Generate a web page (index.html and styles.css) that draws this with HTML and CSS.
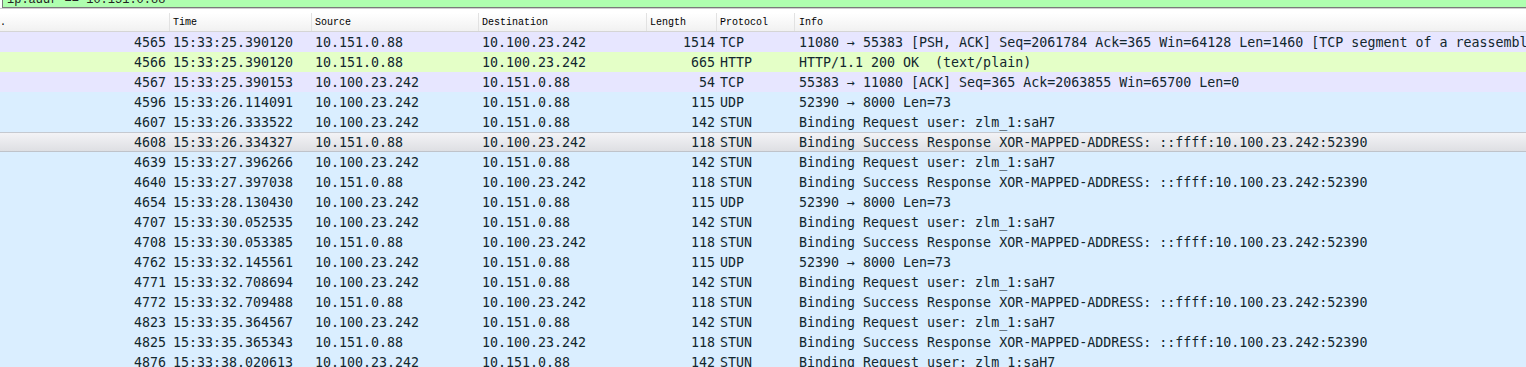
FILE: index.html
```html
<!DOCTYPE html>
<html lang="en">
<head>
    <meta charset="UTF-8">
    <title>Packet list</title>
    <link rel="stylesheet" href="styles.css">
</head>
<body>

    <div class="filter-bar">
        <div class="filter-text">ip.addr == 10.151.0.88</div>
    </div>

    <div class="packet-list">
        <div class="list-header">
            <div class="col no">.</div>
            <div class="col">Time</div>
            <div class="col">Source</div>
            <div class="col">Destination</div>
            <div class="col">Length</div>
            <div class="col">Protocol</div>
            <div class="col info">Info</div>
        </div>

        <div class="row tcp">
            <div class="col no">4565</div><div class="col">15:33:25.390120</div><div class="col">10.151.0.88</div><div class="col">10.100.23.242</div><div class="col len">1514</div><div class="col">TCP</div><div class="col info">11080 → 55383 [PSH, ACK] Seq=2061784 Ack=365 Win=64128 Len=1460 [TCP segment of a reassembl</div>
        </div>
        <div class="row http">
            <div class="col no">4566</div><div class="col">15:33:25.390120</div><div class="col">10.151.0.88</div><div class="col">10.100.23.242</div><div class="col len">665</div><div class="col">HTTP</div><div class="col info">HTTP/1.1 200 OK &nbsp;(text/plain)</div>
        </div>
        <div class="row tcp">
            <div class="col no">4567</div><div class="col">15:33:25.390153</div><div class="col">10.100.23.242</div><div class="col">10.151.0.88</div><div class="col len">54</div><div class="col">TCP</div><div class="col info">55383 → 11080 [ACK] Seq=365 Ack=2063855 Win=65700 Len=0</div>
        </div>
        <div class="row udp">
            <div class="col no">4596</div><div class="col">15:33:26.114091</div><div class="col">10.100.23.242</div><div class="col">10.151.0.88</div><div class="col len">115</div><div class="col">UDP</div><div class="col info">52390 → 8000 Len=73</div>
        </div>
        <div class="row udp">
            <div class="col no">4607</div><div class="col">15:33:26.333522</div><div class="col">10.100.23.242</div><div class="col">10.151.0.88</div><div class="col len">142</div><div class="col">STUN</div><div class="col info">Binding Request user: zlm_1:saH7</div>
        </div>
        <div class="row selected">
            <div class="col no">4608</div><div class="col">15:33:26.334327</div><div class="col">10.151.0.88</div><div class="col">10.100.23.242</div><div class="col len">118</div><div class="col">STUN</div><div class="col info">Binding Success Response XOR-MAPPED-ADDRESS: ::ffff:10.100.23.242:52390</div>
        </div>
        <div class="row udp">
            <div class="col no">4639</div><div class="col">15:33:27.396266</div><div class="col">10.100.23.242</div><div class="col">10.151.0.88</div><div class="col len">142</div><div class="col">STUN</div><div class="col info">Binding Request user: zlm_1:saH7</div>
        </div>
        <div class="row udp">
            <div class="col no">4640</div><div class="col">15:33:27.397038</div><div class="col">10.151.0.88</div><div class="col">10.100.23.242</div><div class="col len">118</div><div class="col">STUN</div><div class="col info">Binding Success Response XOR-MAPPED-ADDRESS: ::ffff:10.100.23.242:52390</div>
        </div>
        <div class="row udp">
            <div class="col no">4654</div><div class="col">15:33:28.130430</div><div class="col">10.100.23.242</div><div class="col">10.151.0.88</div><div class="col len">115</div><div class="col">UDP</div><div class="col info">52390 → 8000 Len=73</div>
        </div>
        <div class="row udp">
            <div class="col no">4707</div><div class="col">15:33:30.052535</div><div class="col">10.100.23.242</div><div class="col">10.151.0.88</div><div class="col len">142</div><div class="col">STUN</div><div class="col info">Binding Request user: zlm_1:saH7</div>
        </div>
        <div class="row udp">
            <div class="col no">4708</div><div class="col">15:33:30.053385</div><div class="col">10.151.0.88</div><div class="col">10.100.23.242</div><div class="col len">118</div><div class="col">STUN</div><div class="col info">Binding Success Response XOR-MAPPED-ADDRESS: ::ffff:10.100.23.242:52390</div>
        </div>
        <div class="row udp">
            <div class="col no">4762</div><div class="col">15:33:32.145561</div><div class="col">10.100.23.242</div><div class="col">10.151.0.88</div><div class="col len">115</div><div class="col">UDP</div><div class="col info">52390 → 8000 Len=73</div>
        </div>
        <div class="row udp">
            <div class="col no">4771</div><div class="col">15:33:32.708694</div><div class="col">10.100.23.242</div><div class="col">10.151.0.88</div><div class="col len">142</div><div class="col">STUN</div><div class="col info">Binding Request user: zlm_1:saH7</div>
        </div>
        <div class="row udp">
            <div class="col no">4772</div><div class="col">15:33:32.709488</div><div class="col">10.151.0.88</div><div class="col">10.100.23.242</div><div class="col len">118</div><div class="col">STUN</div><div class="col info">Binding Success Response XOR-MAPPED-ADDRESS: ::ffff:10.100.23.242:52390</div>
        </div>
        <div class="row udp">
            <div class="col no">4823</div><div class="col">15:33:35.364567</div><div class="col">10.100.23.242</div><div class="col">10.151.0.88</div><div class="col len">142</div><div class="col">STUN</div><div class="col info">Binding Request user: zlm_1:saH7</div>
        </div>
        <div class="row udp">
            <div class="col no">4825</div><div class="col">15:33:35.365343</div><div class="col">10.151.0.88</div><div class="col">10.100.23.242</div><div class="col len">118</div><div class="col">STUN</div><div class="col info">Binding Success Response XOR-MAPPED-ADDRESS: ::ffff:10.100.23.242:52390</div>
        </div>
        <div class="row udp">
            <div class="col no">4876</div><div class="col">15:33:38.020613</div><div class="col">10.100.23.242</div><div class="col">10.151.0.88</div><div class="col len">142</div><div class="col">STUN</div><div class="col info">Binding Request user: zlm_1:saH7</div>
        </div>
    </div>

</body>
</html>
```

FILE: styles.css
```css
/* ==================================== */
/* page                                 */
/* ==================================== */
body {
    margin: 0;
    padding: 0;
    background-color: #fff;
    color: #12272e; /* wireshark text colour */
    font-family: "DejaVu Sans Mono", "Liberation Mono", monospace;
    overflow: hidden;
}

/* display filter bar (mostly scrolled off the top) */
.filter-bar {
    height: 7px;
    margin-left: 2px;
    background-color: #afffaf;
    border-left: 1px solid #7a7a7a;
    border-bottom: 1px solid #7a7a7a;
    overflow: hidden;
}

.filter-text {
    font-family: "Liberation Mono", monospace;
    font-size: 12px;
    line-height: 14px;
    margin-top: -7px;
    padding-left: 4px;
    color: #222;
}

/* ==================================== */
/* packet list                          */
/* ==================================== */
.packet-list {
    border-top: 1px solid #d0d0d0;
    padding-top: 4px;
}

.list-header,
.row {
    display: grid;
    grid-template-columns: 170px 142px 167px 168px 70px 78px 1fr;
}

.list-header {
    height: 18px;
    background: linear-gradient(to bottom, #ffffff, #f1f1f1);
    border-bottom: 1px solid #d5d5d5;
    font-family: "Liberation Mono", monospace;
    font-size: 10px;
    line-height: 20px;
    color: #000;
}

.list-header .col {
    border-right: 1px solid #e2e2e2;
    padding-left: 3px;
}

.list-header .col.no {
    padding-left: 0;
}

.list-header .col.info {
    border-right: none;
}

.row {
    box-sizing: border-box;
    height: 20px;
    padding-top: 1px;
    font-size: 13.3px;
    line-height: 19px;
}

.col {
    white-space: nowrap;
    overflow: hidden;
    padding-left: 3px;
}

.row .col.no {
    text-align: right;
    padding-right: 4px;
}

.row .col.len {
    text-align: right;
    padding-right: 2px;
}

.col.info {
    padding-left: 4px;
}

/* colouring rules */
.row.tcp { background-color: #e7e6ff; }
.row.http { background-color: #e4ffc7; }
.row.udp { background-color: #daeeff; }

.row.selected {
    background: linear-gradient(to bottom, #f3f3f6, #dedfe3);
    border-top: 1px solid #c5c9d0;
    border-bottom: 1px solid #bfc3ca;
    padding-top: 0;
}
```
